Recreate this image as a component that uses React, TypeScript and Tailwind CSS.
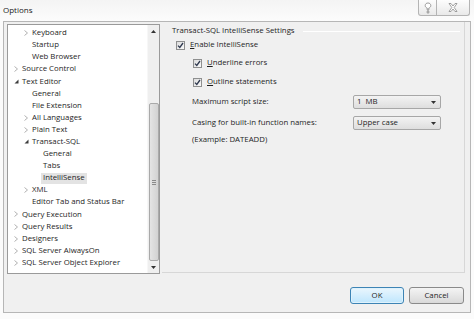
import React from 'react';

type Node = { label: string; level: number; arrow?: 'closed' | 'open'; selected?: boolean };

const tree: Node[] = [
    { label: 'Keyboard', level: 1, arrow: 'closed' },
    { label: 'Startup', level: 1 },
    { label: 'Web Browser', level: 1 },
    { label: 'Source Control', level: 0, arrow: 'closed' },
    { label: 'Text Editor', level: 0, arrow: 'open' },
    { label: 'General', level: 1 },
    { label: 'File Extension', level: 1 },
    { label: 'All Languages', level: 1, arrow: 'closed' },
    { label: 'Plain Text', level: 1, arrow: 'closed' },
    { label: 'Transact-SQL', level: 1, arrow: 'open' },
    { label: 'General', level: 2 },
    { label: 'Tabs', level: 2 },
    { label: 'IntelliSense', level: 2, selected: true },
    { label: 'XML', level: 1, arrow: 'closed' },
    { label: 'Editor Tab and Status Bar', level: 1 },
    { label: 'Query Execution', level: 0, arrow: 'closed' },
    { label: 'Query Results', level: 0, arrow: 'closed' },
    { label: 'Designers', level: 0, arrow: 'closed' },
    { label: 'SQL Server AlwaysOn', level: 0, arrow: 'closed' },
    { label: 'SQL Server Object Explorer', level: 0, arrow: 'closed' },
];

const indent = ['pl-[6px]', 'pl-[16px]', 'pl-[27px]'];

function Arrow({ kind }: { kind?: 'closed' | 'open' }) {
    if (kind === 'closed') {
        return (
            <svg width="4" height="6" viewBox="0 0 4 6">
                <path d="M0.5 0.5 L3.5 3 L0.5 5.5" fill="none" stroke="#b0b0b0" strokeWidth="1" />
            </svg>
        );
    }
    if (kind === 'open') {
        return (
            <svg width="5" height="5" viewBox="0 0 5 5">
                <path d="M4.5 0.5 L4.5 4.5 L0.5 4.5 Z" fill="#3c3c3c" />
            </svg>
        );
    }
    return null;
}

function CheckBox() {
    return (
        <div className="w-[9px] h-[9px] border border-[#8e8f8f] bg-gradient-to-br from-[#dcdcdc] to-[#fafafa] flex items-center justify-center shrink-0">
            <svg width="7" height="7" viewBox="0 0 7 7">
                <path d="M1 3.6 L2.8 5.5 L6 1" fill="none" stroke="#303a50" strokeWidth="1.3" />
            </svg>
        </div>
    );
}

function Combo({ value }: { value: string }) {
    return (
        <div className="w-[88px] h-[14px] border border-[#a7a7a7] rounded-[2px] bg-gradient-to-b from-[#f3f3f3] to-[#dedede] flex items-center justify-between pl-[3px] pr-[4px]">
            <span className="whitespace-pre">{value}</span>
            <svg width="5" height="3" viewBox="0 0 5 3">
                <path d="M0 0 L5 0 L2.5 3 Z" fill="#333" />
            </svg>
        </div>
    );
}

export default function App() {
    return (
        <div
            className="w-[474px] h-[319px] bg-[#fbfbfb] text-[7.8px] text-[#1e1e1e] leading-none overflow-hidden"
            style={{ fontFamily: '"Open Sans", "Noto Sans", sans-serif' }}
        >
            {/* Title bar */}
            <div className="h-[21px] flex items-start justify-between bg-gradient-to-b from-[#f4f4f4] to-[#fcfcfc]">
                <span className="pl-[3px] pt-[6px] text-[8px] text-[#222]">Options</span>
                <div className="flex mr-[4px]">
                    <div className="w-[19px] h-[16px] border border-t-0 border-[#b4b4b4] rounded-bl-[3px] bg-gradient-to-b from-[#fdfdfd] to-[#e9e9e9] flex items-center justify-center">
                        <svg width="8" height="12" viewBox="0 0 8 12">
                            <path d="M4 1 C2.3 1 1.2 2.1 1.2 3.6 C1.2 4.8 2 5.6 3.2 6 L3.2 8 L4.8 8 L4.8 6 C6 5.6 6.8 4.8 6.8 3.6 C6.8 2.1 5.7 1 4 1 Z M3.2 9 L4.8 9 L4.8 11 L3.2 11 Z" fill="#fff" stroke="#858585" strokeWidth="0.8" />
                        </svg>
                    </div>
                    <div className="w-[33px] h-[16px] border border-t-0 border-l-0 border-[#b4b4b4] rounded-br-[3px] bg-gradient-to-b from-[#fdfdfd] to-[#e9e9e9] flex items-center justify-center">
                        <svg width="10" height="9" viewBox="0 0 10 9">
                            <path d="M1 0.5 L3 0.5 L5 3 L7 0.5 L9 0.5 L6.2 4.5 L9 8.5 L7 8.5 L5 6 L3 8.5 L1 8.5 L3.8 4.5 Z" fill="#fff" stroke="#8a8a8a" strokeWidth="0.8" />
                        </svg>
                    </div>
                </div>
            </div>

            {/* Dialog frame */}
            <div className="ml-[3px] w-[468px] h-[292px] border border-[#b6b6b6] bg-[#f0f0f0] flex flex-col">
                <div className="flex items-start h-[252px]">
                    {/* Tree */}
                    <div className="ml-[3px] mt-[2px] w-[153px] h-[250px] border border-[#9a9a9a] bg-white flex">
                        <div className="flex-1 pt-[2px]">
                            {tree.map((n, i) => (
                                <div key={i} className={`flex items-center h-[12.1px] ${indent[n.level]}`}>
                                    <div className="w-[8px] flex items-center">
                                        <Arrow kind={n.arrow} />
                                    </div>
                                    <span className={n.selected ? 'bg-[#e3e3e3] -ml-[2px] px-[2px] py-[1.5px]' : ''}>{n.label}</span>
                                </div>
                            ))}
                        </div>
                        {/* Scrollbar */}
                        <div className="w-[12px] bg-[#efefef] flex flex-col items-center border-l border-[#f7f7f7]">
                            <div className="h-[12px] flex items-center justify-center">
                                <svg width="5" height="3" viewBox="0 0 5 3">
                                    <path d="M0 3 L5 3 L2.5 0 Z" fill="#333" />
                                </svg>
                            </div>
                            <div className="mt-[66px] w-[10px] h-[158px] border border-[#a9a9a9] rounded-[2px] bg-gradient-to-r from-[#e4e4e4] to-[#d2d2d2] flex items-center justify-center">
                                <div className="flex flex-col gap-[1px]">
                                    <div className="w-[4px] h-px bg-[#8a8a8a]" />
                                    <div className="w-[4px] h-px bg-[#8a8a8a]" />
                                    <div className="w-[4px] h-px bg-[#8a8a8a]" />
                                </div>
                            </div>
                            <div className="h-[12px] flex items-center justify-center">
                                <svg width="5" height="3" viewBox="0 0 5 3">
                                    <path d="M0 0 L5 0 L2.5 3 Z" fill="#333" />
                                </svg>
                            </div>
                        </div>
                    </div>

                    {/* Settings panel */}
                    <div className="ml-[2px] w-[303px] h-[251px] border-r border-b border-[#d7d7d7] pl-[10px] pr-[4px] flex flex-col">
                        <div className="mt-[3px] h-[12px] flex items-center gap-[8px]">
                            <span>Transact-SQL IntelliSense Settings</span>
                            <div className="flex-1 h-px bg-[#d5d5d5] border-b border-white" />
                        </div>
                        <div className="mt-[2px] h-[12px] flex items-center gap-[5px] pl-[4px]">
                            <CheckBox />
                            <span><span className="underline">E</span>nable IntelliSense</span>
                        </div>
                        <div className="mt-[6px] h-[12px] flex items-center gap-[5px] pl-[21px]">
                            <CheckBox />
                            <span><span className="underline">U</span>nderline errors</span>
                        </div>
                        <div className="mt-[7px] h-[12px] flex items-center gap-[5px] pl-[21px]">
                            <CheckBox />
                            <span><span className="underline">O</span>utline statements</span>
                        </div>
                        <div className="mt-[7px] h-[14px] flex items-center justify-between pl-[20px] pr-[19px]">
                            <span>Maximum script size:</span>
                            <Combo value="1  MB" />
                        </div>
                        <div className="mt-[7px] h-[14px] flex items-center justify-between pl-[20px] pr-[19px]">
                            <span>Casing for built-in function names:</span>
                            <Combo value="Upper case" />
                        </div>
                        <div className="mt-[4px] h-[12px] flex items-center pl-[20px]">
                            <span>(Example: DATEADD)</span>
                        </div>
                    </div>
                </div>

                {/* Footer buttons */}
                <div className="flex justify-end gap-[5px] pr-[6px] pt-[13px]">
                    <div className="w-[54px] h-[17px] rounded-[3px] border border-[#3d84b5] bg-gradient-to-b from-[#eaf6fd] to-[#bee6fd] flex items-center justify-center shadow-[inset_0_0_0_1px_#dff2fc]">
                        OK
                    </div>
                    <div className="w-[55px] h-[17px] rounded-[3px] border border-[#8a8a8a] bg-gradient-to-b from-[#f4f4f4] to-[#d9d9d9] flex items-center justify-center">
                        Cancel
                    </div>
                </div>
            </div>
        </div>
    );
}
